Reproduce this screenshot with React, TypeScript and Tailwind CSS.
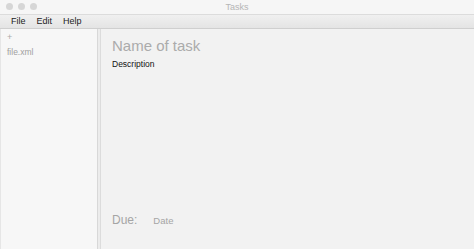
export default function App() {
  return (
    <div
      className="w-[474px] h-[249px] flex flex-col bg-[#f2f2f2] overflow-hidden"
      style={{ fontFamily: '"Liberation Sans", Arial, sans-serif' }}
    >
      {/* title bar */}
      <div className="h-[14px] relative flex items-center justify-center bg-[#f6f6f6]">
        <div className="absolute left-[6px] top-[3px] flex gap-[5px]">
          <div className="w-[7px] h-[7px] rounded-full bg-[#d6d6d6]" />
          <div className="w-[7px] h-[7px] rounded-full bg-[#d6d6d6]" />
          <div className="w-[7px] h-[7px] rounded-full bg-[#d6d6d6]" />
        </div>
        <span className="text-[9px] leading-none text-[#b5b5b5]">Tasks</span>
      </div>
      {/* menu bar */}
      <div className="h-[15px] flex items-center gap-[11px] px-[11px] bg-gradient-to-b from-[#f0f0f0] to-[#e4e4e4] border-t border-[#dcdcdc] border-b border-b-[#cfcfcf]">
        <span className="text-[9px] leading-none text-[#222]">File</span>
        <span className="text-[9px] leading-none text-[#222]">Edit</span>
        <span className="text-[9px] leading-none text-[#222]">Help</span>
      </div>
      {/* body */}
      <div className="flex-1 flex">
        <div className="w-[98px] flex flex-col bg-[#f7f7f7] border-l border-[#e6e6e6] border-r border-r-[#d8d8d8] pt-[2px] px-[6px]">
          <span className="text-[9px] leading-[12px] text-[#aaa]">+</span>
          <span className="text-[8.5px] leading-[14px] text-[#a0a0a0] mt-[2px]">file.xml</span>
        </div>
        <div className="w-[3px] bg-[#ececec] border-r border-[#dcdcdc]" />
        <div className="flex-1 flex flex-col pl-[11px] pt-[7px] pb-[23px]">
          <span className="text-[15px] leading-[20px] text-[#ababab]">Name of task</span>
          <span className="text-[8.5px] leading-[12px] text-[#111] mt-[2px]">Description</span>
          <div className="flex-1" />
          <div className="flex items-baseline">
            <span className="text-[12px] leading-none text-[#a5a5a5]">Due:</span>
            <span className="text-[9.5px] leading-none text-[#a5a5a5] ml-[16px]">Date</span>
          </div>
        </div>
      </div>
    </div>
  );
}
